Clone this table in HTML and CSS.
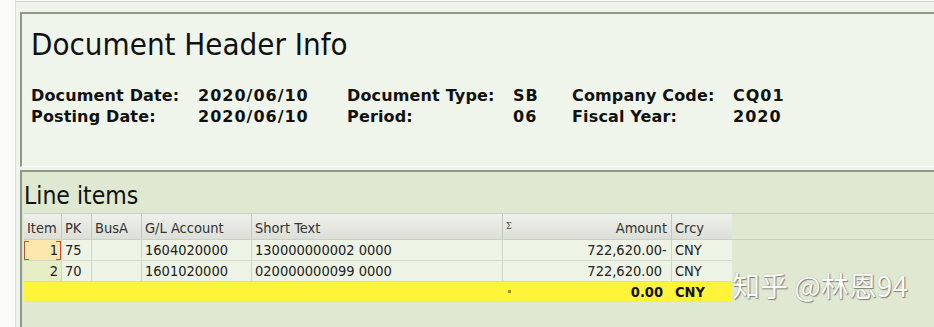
FILE: index.html
```html
<!DOCTYPE html>
<html lang="en">
<head>
<meta charset="utf-8">
<title>Document Header Info</title>
<link rel="stylesheet" href="styles.css">
</head>
<body>
<div class="screen">
  <div class="gutter"></div>
  <div class="main">
    <section class="hdr-panel">
      <h1 class="hdr-title">Document Header Info</h1>
      <div class="fields">
        <span class="lbl">Document Date:</span><span class="val">2020/06/10</span>
        <span class="lbl">Document Type:</span><span class="val">SB</span>
        <span class="lbl">Company Code:</span><span class="val">CQ01</span>
        <span class="lbl">Posting Date:</span><span class="val">2020/06/10</span>
        <span class="lbl">Period:</span><span class="val">06</span>
        <span class="lbl">Fiscal Year:</span><span class="val">2020</span>
      </div>
    </section>
    <section class="items-panel">
      <h2 class="items-title">Line items</h2>
      <div class="thead">
        <div class="trow">
          <div class="th">Item</div>
          <div class="th">PK</div>
          <div class="th">BusA</div>
          <div class="th">G/L Account</div>
          <div class="th">Short Text</div>
          <div class="th th-amt"><span class="sigma">Σ</span><span>Amount</span></div>
          <div class="th">Crcy</div>
        </div>
      </div>
      <div class="trow body-row">
        <div class="td num item item-sel">1</div>
        <div class="td">75</div>
        <div class="td"></div>
        <div class="td">1604020000</div>
        <div class="td">130000000002 0000</div>
        <div class="td num">722,620.00<span class="sign">-</span></div>
        <div class="td">CNY</div>
      </div>
      <div class="trow body-row">
        <div class="td num item item-alt">2</div>
        <div class="td">70</div>
        <div class="td"></div>
        <div class="td">1601020000</div>
        <div class="td">020000000099 0000</div>
        <div class="td num">722,620.00<span class="sign"></span></div>
        <div class="td">CNY</div>
      </div>
      <div class="total-row">
        <div class="tot-spacer"></div>
        <div class="tot-amt"><span class="dot"></span><span class="tot-val">0.00<span class="sign"></span></span></div>
        <div class="tot-cur">CNY</div>
      </div>
    </section>
    <div class="watermark">知乎 @林恩94</div>
  </div>
</div>
</body>
</html>
```

FILE: styles.css
```css
* { box-sizing: border-box; }

body {
  margin: 0;
  background: #fbfcfa;
  font-family: "DejaVu Sans Condensed", "DejaVu Sans", sans-serif;
  font-stretch: condensed;
  color: #111;
}

.screen {
  display: flex;
  height: 327px;
  overflow: hidden;
}

.gutter {
  width: 16px;
  flex: none;
  background: #fbfcfa;
  border-right: 1px solid #dde1d9;
}

.main {
  flex: 1;
  position: relative;
  display: flex;
  flex-direction: column;
  margin-top: 1px;
  border-top: 1px solid #cdd4c7;
  background: #eef4ea;
  padding: 10px 0 0 4px;
}

.hdr-panel {
  height: 155px;
  flex: none;
  background: #eff5ea;
  border-left: 2px solid #8d9a87;
  border-top: 2px solid #8d9a87;
  border-bottom: 1px solid #fbfdf8;
  padding-left: 9px;
}

.hdr-title {
  margin: 0;
  padding-top: 10px;
  font-size: 31px;
  line-height: 40px;
  font-weight: normal;
  color: #111;
}

.fields {
  display: grid;
  grid-template-columns: 167px 149px 166px 59px 161px auto;
  margin-top: 21px;
  font-family: "DejaVu Sans", sans-serif;
  font-stretch: normal;
  font-weight: bold;
  font-size: 16px;
  line-height: 21px;
  color: #111;
}

.fields .lbl { letter-spacing: 0.15px; }
.fields .val { letter-spacing: 1px; }

.items-panel {
  flex: 1;
  margin-top: 3px;
  background: #dfe8d0;
  border-left: 2px solid #8d9a87;
  border-top: 2px solid #8d9a87;
  padding-left: 2px;
}

.items-title {
  margin: 0;
  padding-top: 6px;
  height: 41px;
  font-size: 24.5px;
  line-height: 35px;
  font-weight: normal;
  color: #111;
}

.thead {
  border-top: 1px solid #c9d1bf;
  border-bottom: 1px solid #c9d1bf;
}

.trow {
  display: grid;
  grid-template-columns: 38px 30px 50px 110px 251px 169px 60px;
  width: 708px;
  font-size: 14.5px;
}

.th {
  height: 25px;
  padding: 4px 3px 0 3px;
  line-height: 20px;
  color: #333;
  background: linear-gradient(#eff0eb, #dcdfd7);
  border-right: 1px solid #c4c9be;
  white-space: nowrap;
}

.th:last-child { border-right: 0; }

.th-amt {
  display: flex;
  justify-content: space-between;
  padding-right: 4px;
}

.sigma {
  font-family: "DejaVu Serif", serif;
  font-size: 9px;
  line-height: 16px;
  color: #444;
}

.body-row {
  height: 21px;
  border-bottom: 1px solid #d3dac9;
  background: #edf3e5;
}

.td {
  position: relative;
  height: 20px;
  padding: 0 3px;
  line-height: 20px;
  color: #222;
  border-right: 1px solid #d0d7c7;
  white-space: nowrap;
}

.td:last-child { border-right: 0; }

.num { text-align: right; }

.sign {
  display: inline-block;
  width: 6px;
  text-align: left;
}

.item-sel { background: #fde7ad; }
.item-alt { background: #e7eec6; }

.item-sel::before,
.item-sel::after {
  content: "";
  position: absolute;
  top: 1px;
  bottom: 0;
  width: 4px;
  border: 1px solid #c0502e;
}

.item-sel::before { left: 0; border-right: 0; }
.item-sel::after { right: 0; border-left: 0; }

.total-row {
  display: flex;
  width: 708px;
  height: 20px;
  background: #fff43a;
  font-size: 14.5px;
  line-height: 20px;
  font-weight: bold;
  color: #111;
  border-bottom: 1px solid #e5e6a6;
}

.tot-spacer { width: 479px; }

.tot-amt {
  width: 169px;
  display: flex;
  justify-content: space-between;
  align-items: center;
  padding: 0 3px;
}

.dot {
  width: 3px;
  height: 3px;
  margin-left: 2px;
  background: #9a922c;
}

.tot-cur { padding-left: 3px; }

.watermark {
  position: absolute;
  left: 716px;
  top: 265px;
  font-family: "Noto Sans CJK SC", sans-serif;
  font-stretch: normal;
  font-size: 28px;
  line-height: 36px;
  color: #fbfbf8;
  text-shadow: 1px 1px 1px #7e7e78, 0 0 1px #9a9a92;
}
```
